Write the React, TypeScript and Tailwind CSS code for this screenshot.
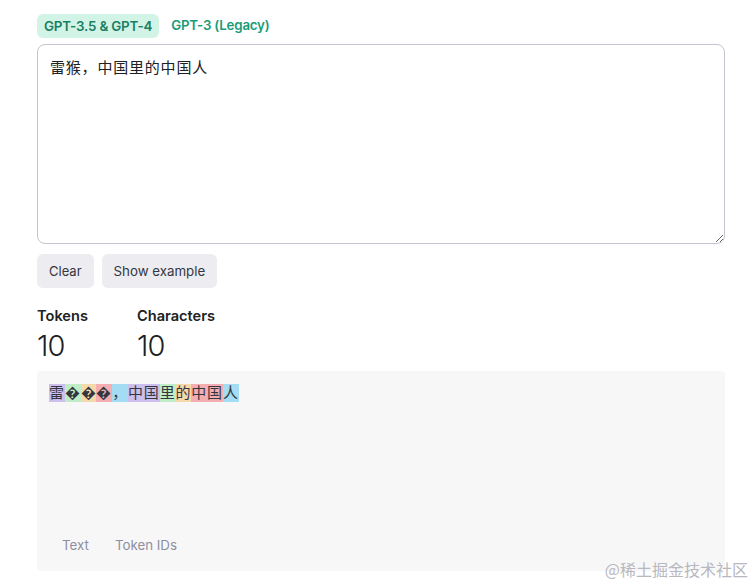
import React from 'react';

const FONT = { fontFamily: 'Inter, "Noto Sans CJK SC", sans-serif' };

// token highlight colours, cycled like the tokenizer page
const COLORS = [
  'bg-[rgba(107,64,216,0.3)]',
  'bg-[rgba(104,222,122,0.4)]',
  'bg-[rgba(244,172,54,0.4)]',
  'bg-[rgba(239,65,70,0.4)]',
  'bg-[rgba(39,181,234,0.4)]',
];

const TOKENS = ['雷', '\uFFFD', '\uFFFD', '\uFFFD', '，', '中国', '里', '的', '中国', '人'];

export default function App() {
  const [text, setText] = React.useState('雷猴，中国里的中国人');

  return (
    <div className="relative h-[584px] w-[753px] overflow-hidden bg-white text-[#202123]" style={FONT}>
      <div className="ml-[37px] w-[688px] pt-[14px]">
        {/* model tabs */}
        <div className="flex items-center gap-[5px]">
          <button className="h-[24px] rounded-[6px] bg-[#d2f4e6] px-[7px] text-[13.4px] font-semibold tracking-[-0.2px] text-[#1a7f64]">
            GPT-3.5 &amp; GPT-4
          </button>
          <button className="h-[24px] px-[7px] text-[13.3px] font-semibold tracking-[-0.2px] text-[#1a9b78]">
            GPT-3 (Legacy)
          </button>
        </div>

        <textarea
          value={text}
          onChange={e => setText(e.target.value)}
          className="mt-[6px] block h-[200px] w-full resize-y rounded-[8px] border border-[#c5c5d2] px-[12px] pt-[13px] pb-[12px] text-[15px] leading-[20px] tracking-[0.8px] text-[#202123] outline-none"
          style={FONT}
        />

        <div className="mt-[10px] flex gap-[8px]">
          <button className="h-[34px] rounded-[6px] bg-[#ececf1] px-[12px] pt-[1px] text-[13px] text-[#353740]">Clear</button>
          <button className="h-[34px] rounded-[6px] bg-[#ececf1] px-[12px] pt-[1px] text-[13.3px] text-[#353740]">Show example</button>
        </div>

        {/* stats */}
        <div className="mt-[19px] flex">
          <div className="w-[100px]">
            <div className="text-[14.6px] font-semibold leading-[18px] text-[#202123]">Tokens</div>
            <div className="mt-[4px] text-[29px] font-light leading-[34px] tracking-[-1px] text-[#202123]">10</div>
          </div>
          <div>
            <div className="text-[14.6px] font-semibold leading-[18px] text-[#202123]">Characters</div>
            <div className="mt-[4px] text-[29px] font-light leading-[34px] tracking-[-1px] text-[#202123]">10</div>
          </div>
        </div>

        {/* tokenized output */}
        <div className="mt-[8px] flex h-[200px] flex-col rounded-[4px] bg-[#f7f7f8] px-[12px] pt-[13px]">
          <div className="flex text-[15px] leading-[18px] tracking-[0.8px] text-[#353740]">
            {TOKENS.map((t, i) => (
              <span key={i} className={COLORS[i % COLORS.length]}>
                {t}
              </span>
            ))}
          </div>
          <div className="mt-auto mb-[15px] flex gap-[4px] pl-[2px]">
            <button className="px-[11px] text-[13.3px] text-[#8e8ea0]">Text</button>
            <button className="px-[11px] text-[13.3px] text-[#8e8ea0]">Token IDs</button>
          </div>
        </div>
      </div>

      <div
        className="absolute bottom-[3px] right-[5px] text-[16px] text-[#b8b8c0]"
        style={{ fontFamily: '"Noto Sans CJK SC", sans-serif' }}
      >
        @稀土掘金技术社区
      </div>
    </div>
  );
}
